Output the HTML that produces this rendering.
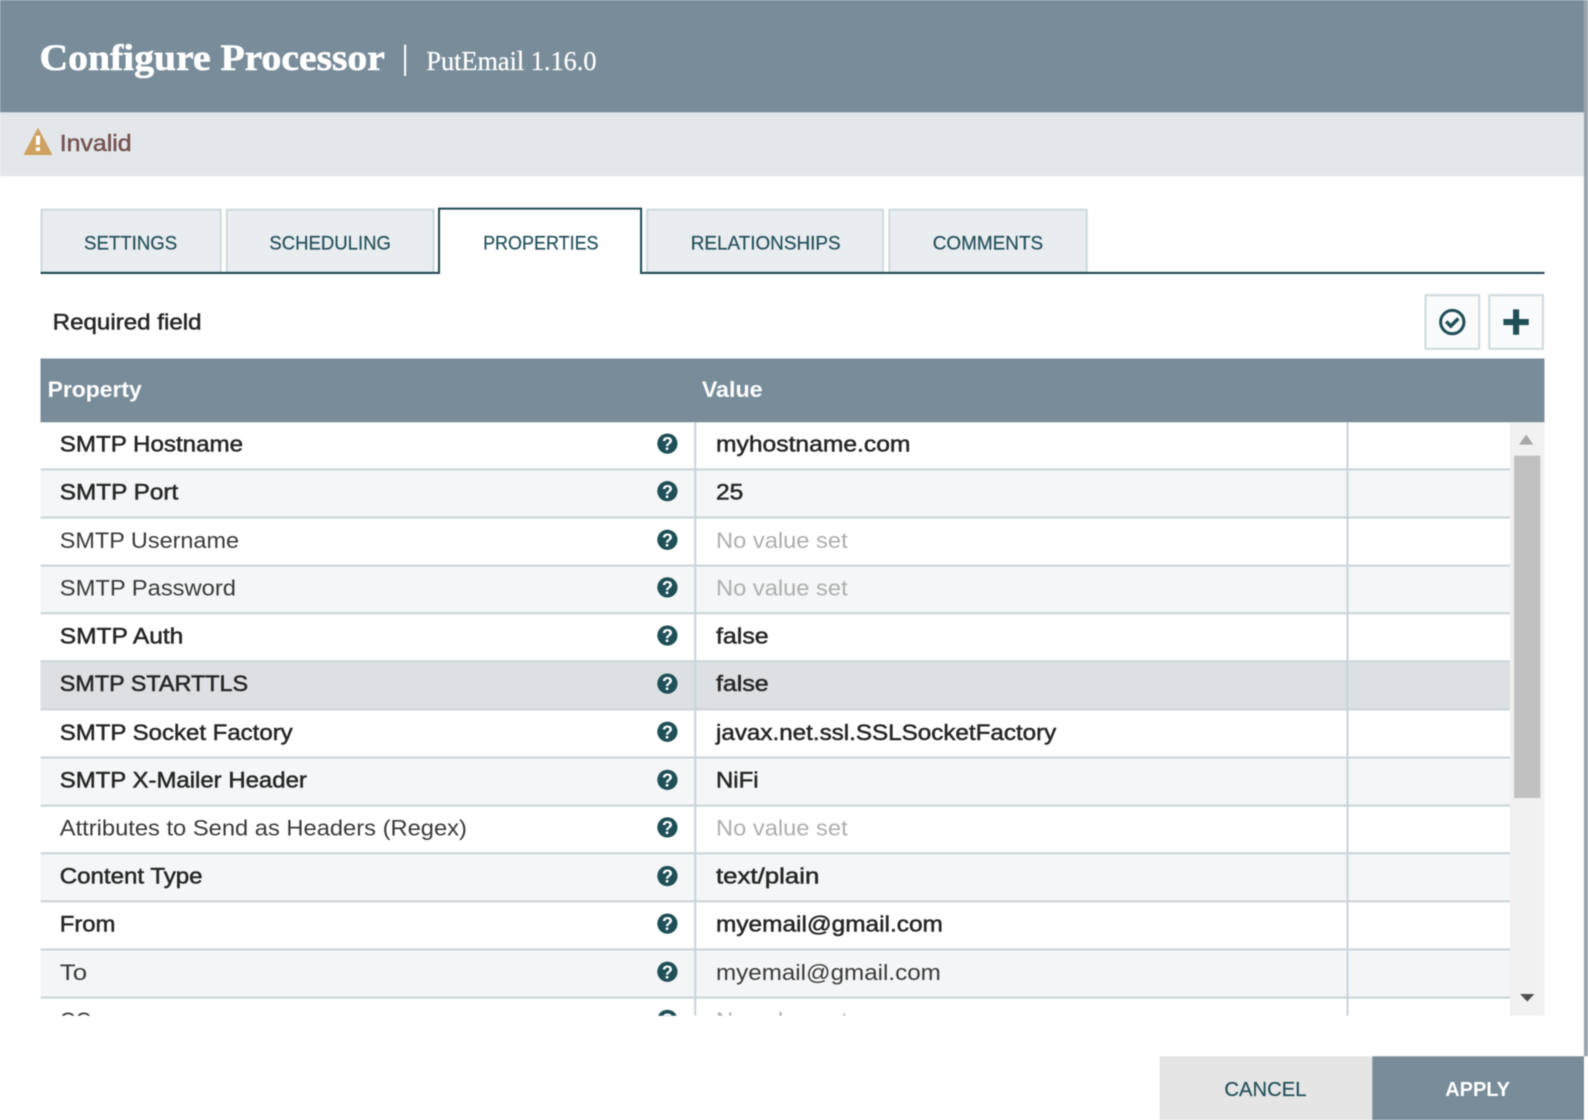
<!DOCTYPE html>
<html><head><meta charset="utf-8"><title>Configure Processor</title>
<style>
html,body{margin:0;padding:0;background:#fff;width:1588px;height:1120px;overflow:hidden}
svg{display:block;position:absolute;left:0;top:0;filter:blur(.4px)}
text{font-family:"Liberation Sans",sans-serif}
.m{font-size:22px;fill:#262626;stroke:#262626;stroke-width:.5}
.r{font-size:22px;fill:#3a3a3a}
.p{font-size:22px;fill:#aeaeae}
.t{font-size:19px;fill:#24505a;stroke:#24505a;stroke-width:.2}
.h{font-size:22px;font-weight:bold;fill:#fff}
.q{font-size:18px;font-weight:bold;fill:#fff;text-anchor:middle}
</style></head><body>
<svg width="1588" height="1120" viewBox="0 0 1568 1105.9" xmlns="http://www.w3.org/2000/svg">
<defs><clipPath id="c"><rect x="0" y="417" width="1568" height="586"/></clipPath></defs>
<rect width="1568" height="1106" fill="#fff"/>
<rect y="0" width="1564" height="111" fill="#788c9a"/>
<rect y="111" width="1564" height="63" fill="#e3e7ea"/>
<rect x="1564" y="0" width="4" height="1043" fill="#98a5ad"/>
<text x="39" y="69" font-size="37" font-weight="bold" fill="#fff" stroke="#fff" stroke-width=".6" style="font-family:'Liberation Serif',serif" textLength="341" lengthAdjust="spacingAndGlyphs">Configure Processor</text>
<rect x="399" y="44" width="2" height="31" fill="#fff"/>
<text x="421" y="69" font-size="27" fill="#fff" stroke="#fff" stroke-width=".25" style="font-family:'Liberation Serif',serif" textLength="168" lengthAdjust="spacingAndGlyphs">PutEmail 1.16.0</text>
<path d="M37.5 127 L51 152.5 L24 152.5 Z" fill="#cfa262" stroke="#cfa262" stroke-linejoin="round"/>
<rect x="35.500" y="134" width="4" height="9" fill="#fff"/><rect x="35.500" y="145.500" width="4" height="3.500" fill="#fff"/>
<text x="59" y="149" font-size="23" fill="#775351" stroke="#775351" stroke-width=".5" textLength="71" lengthAdjust="spacingAndGlyphs">Invalid</text>

<!-- tabs -->
<rect x="41" y="207" width="177" height="62" fill="#eaedf0" stroke="#cfdadd" stroke-width="2"/>
<rect x="224" y="207" width="204" height="62" fill="#e9edf0" stroke="#cfdadd" stroke-width="2"/>
<rect x="639" y="207" width="233" height="62" fill="#e9edf0" stroke="#cfdadd" stroke-width="2"/>
<rect x="878" y="207" width="195" height="62" fill="#e9edf0" stroke="#cfdadd" stroke-width="2"/>
<path d="M40 269.500 H433.500 V206 H633 V269.500 H1525" fill="#fff" stroke="none"/>
<path d="M40 269.500 H433.500 V206 H633 V269.500 H1525" fill="none" stroke="#1f4a52" stroke-width="2"/>
<text class="t" x="83" y="246.500" textLength="92" lengthAdjust="spacingAndGlyphs">SETTINGS</text>
<text class="t" x="266" y="246.500" textLength="120" lengthAdjust="spacingAndGlyphs">SCHEDULING</text>
<text class="t" x="477" y="246.500" textLength="114" lengthAdjust="spacingAndGlyphs">PROPERTIES</text>
<text class="t" x="682" y="246.500" textLength="148" lengthAdjust="spacingAndGlyphs">RELATIONSHIPS</text>
<text class="t" x="921" y="246.500" textLength="109" lengthAdjust="spacingAndGlyphs">COMMENTS</text>

<text x="52" y="325.500" font-size="22" fill="#262626" stroke="#262626" stroke-width=".5" textLength="147" lengthAdjust="spacingAndGlyphs">Required field</text>

<rect x="1407.500" y="291.500" width="53" height="53" fill="#f9fafb" stroke="#cfdadd" stroke-width="2"/>
<rect x="1470.500" y="291.500" width="53" height="53" fill="#f9fafb" stroke="#cfdadd" stroke-width="2"/>
<circle cx="1434" cy="318" r="11.500" fill="none" stroke="#1f4f57" stroke-width="3"/>
<path d="M1428 317.500 L1432.500 322 L1440 314.500" fill="none" stroke="#1f4f57" stroke-width="3.500"/>
<path d="M1484.500 318 H1509.500 M1497 305.500 V330.500" fill="none" stroke="#1f4f57" stroke-width="6"/>

<!-- table header -->
<rect x="40" y="354" width="1485" height="63" fill="#788c9a"/>
<text class="h" x="47" y="392" textLength="93" lengthAdjust="spacingAndGlyphs">Property</text>
<text class="h" x="693" y="392" textLength="60" lengthAdjust="spacingAndGlyphs">Value</text>

<g clip-path="url(#c)">
<rect x="40" y="417" width="1451" height="590" fill="#fff"/>
<rect x="40" y="464" width="1451" height="46.500" fill="#f4f6f7"/>
<rect x="40" y="559" width="1451" height="46" fill="#f4f6f7"/>
<rect x="40" y="654" width="1451" height="46" fill="#dce0e3"/>
<rect x="40" y="749" width="1451" height="46" fill="#f4f6f7"/>
<rect x="40" y="843" width="1451" height="47" fill="#f4f6f7"/>
<rect x="40" y="938" width="1451" height="47" fill="#f4f5f6"/>
<g fill="#c9d4d9">
<rect x="40" y="462.500" width="1451" height="2"/>
<rect x="40" y="510" width="1451" height="2"/>
<rect x="40" y="557.500" width="1451" height="2"/>
<rect x="40" y="604.500" width="1451" height="2"/>
<rect x="40" y="652" width="1451" height="2"/>
<rect x="40" y="699.500" width="1451" height="2"/>
<rect x="40" y="747" width="1451" height="2"/>
<rect x="40" y="794.500" width="1451" height="2"/>
<rect x="40" y="841.500" width="1451" height="2"/>
<rect x="40" y="889" width="1451" height="2"/>
<rect x="40" y="936.500" width="1451" height="2"/>
<rect x="40" y="984" width="1451" height="2"/>
<rect x="685.500" y="417" width="2" height="590"/>
<rect x="1329.500" y="417" width="2" height="590"/>
</g>

<text class="m" x="59" y="446" textLength="181" lengthAdjust="spacingAndGlyphs">SMTP Hostname</text>
<text class="m" x="59" y="493" textLength="117" lengthAdjust="spacingAndGlyphs">SMTP Port</text>
<text class="r" x="59" y="541" textLength="177" lengthAdjust="spacingAndGlyphs">SMTP Username</text>
<text class="r" x="59" y="588" textLength="174" lengthAdjust="spacingAndGlyphs">SMTP Password</text>
<text class="m" x="59" y="635.500" textLength="122" lengthAdjust="spacingAndGlyphs">SMTP Auth</text>
<text class="m" x="59" y="682.500" textLength="186" lengthAdjust="spacingAndGlyphs">SMTP STARTTLS</text>
<text class="m" x="59" y="730.500" textLength="230" lengthAdjust="spacingAndGlyphs">SMTP Socket Factory</text>
<text class="m" x="59" y="777.500" textLength="244" lengthAdjust="spacingAndGlyphs">SMTP X-Mailer Header</text>
<text class="r" x="59" y="825" textLength="402" lengthAdjust="spacingAndGlyphs">Attributes to Send as Headers (Regex)</text>
<text class="m" x="59" y="872.500" textLength="141" lengthAdjust="spacingAndGlyphs">Content Type</text>
<text class="m" x="59" y="920" textLength="55" lengthAdjust="spacingAndGlyphs">From</text>
<text class="r" x="59" y="967.500" textLength="27" lengthAdjust="spacingAndGlyphs">To</text>
<text class="r" x="59" y="1015" textLength="31" lengthAdjust="spacingAndGlyphs">CC</text>

<g fill="#1f4f57">
<circle cx="659" cy="438" r="10"/><circle cx="659" cy="485" r="10"/><circle cx="659" cy="533" r="10"/>
<circle cx="659" cy="580" r="10"/><circle cx="659" cy="627.500" r="10"/><circle cx="659" cy="675" r="10"/>
<circle cx="659" cy="722.500" r="10"/><circle cx="659" cy="770" r="10"/><circle cx="659" cy="817" r="10"/>
<circle cx="659" cy="865" r="10"/><circle cx="659" cy="912" r="10"/><circle cx="659" cy="959.500" r="10"/>
<circle cx="659" cy="1007" r="10"/>
</g>
<text class="q" x="659" y="444.500">?</text><text class="q" x="659" y="491.500">?</text><text class="q" x="659" y="539.500">?</text>
<text class="q" x="659" y="586.500">?</text><text class="q" x="659" y="634">?</text><text class="q" x="659" y="681.500">?</text>
<text class="q" x="659" y="729">?</text><text class="q" x="659" y="776.500">?</text><text class="q" x="659" y="823.500">?</text>
<text class="q" x="659" y="871.500">?</text><text class="q" x="659" y="918.500">?</text><text class="q" x="659" y="966">?</text>
<text class="q" x="659" y="1013.500">?</text>

<text class="m" x="707" y="446" textLength="192" lengthAdjust="spacingAndGlyphs">myhostname.com</text>
<text class="m" x="707" y="493" textLength="27" lengthAdjust="spacingAndGlyphs">25</text>
<text class="p" x="707" y="541" textLength="130" lengthAdjust="spacingAndGlyphs">No value set</text>
<text class="p" x="707" y="588" textLength="130" lengthAdjust="spacingAndGlyphs">No value set</text>
<text class="m" x="707" y="635.500" textLength="52" lengthAdjust="spacingAndGlyphs">false</text>
<text class="m" x="707" y="682.500" textLength="52" lengthAdjust="spacingAndGlyphs">false</text>
<text class="m" x="707" y="730.500" textLength="336" lengthAdjust="spacingAndGlyphs">javax.net.ssl.SSLSocketFactory</text>
<text class="m" x="707" y="777.500" textLength="42" lengthAdjust="spacingAndGlyphs">NiFi</text>
<text class="p" x="707" y="825" textLength="130" lengthAdjust="spacingAndGlyphs">No value set</text>
<text class="m" x="707" y="872.500" textLength="102" lengthAdjust="spacingAndGlyphs">text/plain</text>
<text class="m" x="707" y="920" textLength="224" lengthAdjust="spacingAndGlyphs">myemail@gmail.com</text>
<text class="r" x="707" y="967.500" textLength="222" lengthAdjust="spacingAndGlyphs">myemail@gmail.com</text>
<text class="p" x="707" y="1015" textLength="130" lengthAdjust="spacingAndGlyphs">No value set</text>
</g>

<!-- scrollbar -->
<rect x="1491" y="417" width="34" height="586" fill="#f1f1f1"/>
<rect x="1495" y="450" width="26" height="338" fill="#c1c1c1"/>
<path d="M1507 429 L1514 439 H1500 Z" fill="#a8a8a8"/>
<path d="M1501 981.500 H1515 L1508 989 Z" fill="#505050"/>

<!-- footer buttons -->
<rect x="1145" y="1043" width="210" height="63" fill="#e5e5e5"/>
<rect x="1355" y="1043" width="209" height="63" fill="#788c9a"/>
<text x="1209" y="1082" font-size="20" fill="#24505a" stroke="#24505a" stroke-width=".2" textLength="81" lengthAdjust="spacingAndGlyphs">CANCEL</text>
<text x="1427" y="1082" font-size="20" font-weight="bold" fill="#fff" textLength="64" lengthAdjust="spacingAndGlyphs">APPLY</text>
</svg>
</body></html>
